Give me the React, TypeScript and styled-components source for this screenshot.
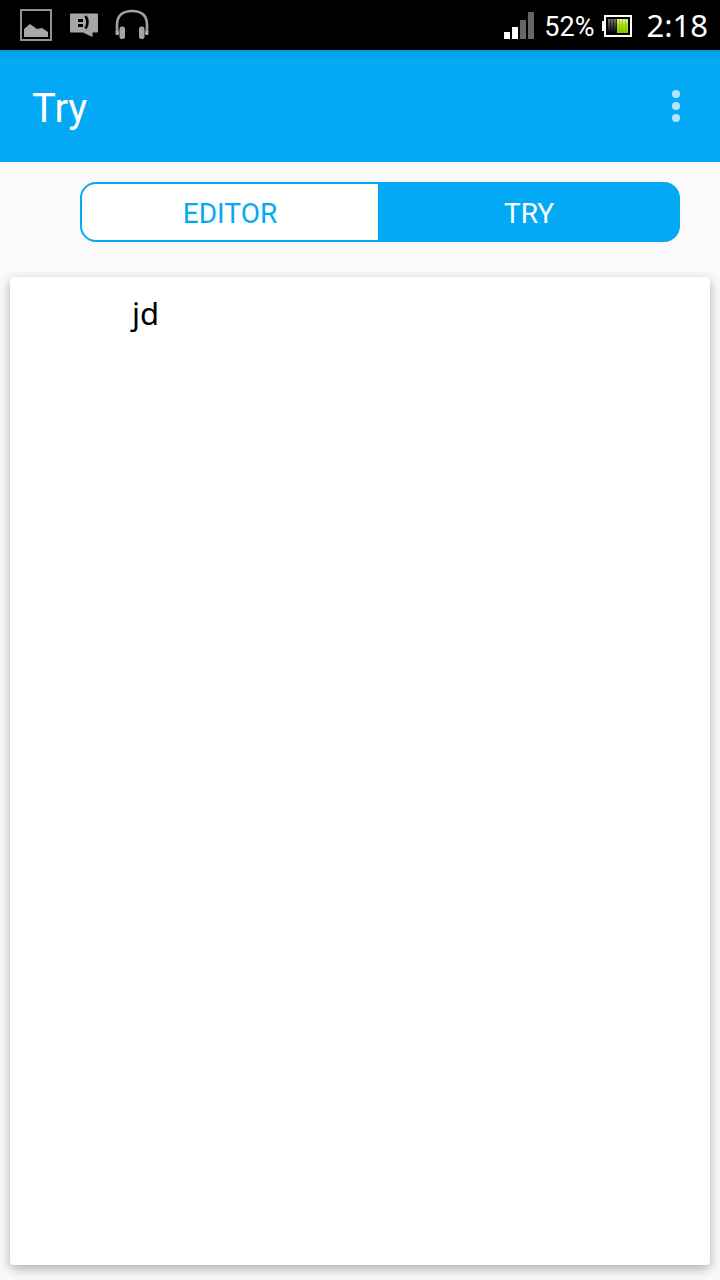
import React, { useState } from "react";
import styled, { createGlobalStyle } from "styled-components";

const BLUE = "#03a9f4";

const GlobalStyle = createGlobalStyle`
  * { box-sizing: border-box; }
  body { margin: 0; background: #fafafa; font-family: Roboto, sans-serif; }
`;

const Screen = styled.div`
  display: flex;
  flex-direction: column;
  min-height: 100vh;
`;

const StatusBar = styled.div`
  display: flex;
  align-items: center;
  justify-content: space-between;
  height: 50px;
  padding: 0 12px 0 18px;
  background: #000;
  color: #fff;
`;

const StatusGroup = styled.div<{ $gap: number }>`
  display: flex;
  align-items: center;
  gap: ${(p) => p.$gap}px;
  svg { display: block; }
`;

const BatteryLevel = styled.span`
  padding: 4px 0 0 2px;
  font: 400 27px/46px Roboto, sans-serif;
`;

const Clock = styled.time`
  padding-left: 6px;
  font: 400 31px/50px "Noto Sans", sans-serif;
`;

const AppBar = styled.header`
  display: flex;
  align-items: center;
  justify-content: space-between;
  height: 112px;
  padding: 0 24px 0 32px;
  background: linear-gradient(#0596d9, #049fe6 3px, ${BLUE} 10px);
`;

const Title = styled.h1`
  margin: 0;
  padding-top: 6px;
  color: #fff;
  font-size: 40px;
  font-weight: 400;
  line-height: 48px;
`;

const MenuButton = styled.button`
  width: 40px;
  height: 64px;
  padding: 0;
  border: 0;
  background: none;
  svg { display: block; }
`;

const Segments = styled.div`
  display: grid;
  grid-template-columns: 1fr 1fr;
  height: 60px;
  margin: 20px 40px 35px 80px;
  border: 2px solid ${BLUE};
  border-radius: 16px;
  background: ${BLUE};
  overflow: hidden;
`;

const Segment = styled.button<{ $active: boolean }>`
  padding: 4px 0 0;
  border: 0 solid ${BLUE};
  background: ${(p) => (p.$active ? BLUE : "#fff")};
  color: ${(p) => (p.$active ? "#fff" : BLUE)};
  font: 400 28px/32px Roboto, sans-serif;

  &:first-child { border-right-width: 2px; }
`;

const Card = styled.main`
  flex: 1;
  margin: 0 10px 15px;
  padding: 16px 122px;
  border-radius: 4px;
  background: #fff;
  box-shadow: 0 4px 12px rgba(0, 0, 0, 0.3);
`;

const Content = styled.p`
  margin: 0;
  color: #000;
  font-family: "Noto Sans", sans-serif;
  font-size: 31px;
  line-height: 40px;
`;

const PictureIcon = () => (
  <svg width="36" height="36" viewBox="0 0 36 36" aria-hidden="true">
    <rect x="3" y="3" width="30" height="30" fill="none" stroke="#929292" strokeWidth="2" />
    <path d="M6 30V22L12 17L19 22L24 21L30 25V30Z" fill="#a6a6a6" />
  </svg>
);

const ChatIcon = () => (
  <svg width="36" height="36" viewBox="0 0 36 36" aria-hidden="true">
    <path d="M5 6.500H31Q32 6.500 32 7.500V24.500Q32 25.500 31 25.500H26.500V30L17 25.500H5Q4 25.500 4 24.500V7.500Q4 6.500 5 6.500Z" fill="#a6a6a6" />
    <path d="M12 13.500H17M12 18.500H17" stroke="#000" strokeWidth="3" />
    <path d="M19.500 9Q23.500 15 19.500 21.500" fill="none" stroke="#000" strokeWidth="2.600" />
  </svg>
);

const HeadphonesIcon = () => (
  <svg width="36" height="36" viewBox="0 0 36 36" aria-hidden="true">
    <path d="M3 24V18C3 8 9 4 18 4S33 8 33 18V24" fill="none" stroke="#a0a0a0" strokeWidth="2.600" />
    <rect x="5.500" y="19.500" width="5.500" height="12.500" rx="2.500" fill="#a6a6a6" />
    <rect x="25" y="19.500" width="5.500" height="12.500" rx="2.500" fill="#a6a6a6" />
    <rect x="1.500" y="23.500" width="3.500" height="4.500" rx="1" fill="#a6a6a6" />
    <rect x="31" y="23.500" width="3.500" height="4.500" rx="1" fill="#a6a6a6" />
  </svg>
);

const SignalIcon = () => (
  <svg width="30" height="28" viewBox="0 0 30 28" aria-hidden="true">
    <path d="M0 21H6V28H0ZM8 16H14V28H8Z" fill="#fff" />
    <path d="M16 9H22V28H16ZM24 1H30V28H24Z" fill="#666" />
  </svg>
);

const BatteryIcon = () => (
  <svg width="30" height="24" viewBox="0 0 30 24" aria-hidden="true">
    <defs>
      <linearGradient id="empty" x2="0" y2="1">
        <stop stopColor="#777" />
        <stop offset="1" stopColor="#000" />
      </linearGradient>
      <linearGradient id="charge" x2="0" y2="1">
        <stop stopColor="#e4f79c" />
        <stop offset=".45" stopColor="#a5df16" />
        <stop offset="1" stopColor="#8fcb00" />
      </linearGradient>
    </defs>
    <rect x="3" y="3" width="26" height="20" fill="#000" stroke="#fff" strokeWidth="2" />
    <rect x="0" y="8" width="2" height="10" fill="#fff" />
    <rect x="6" y="6" width="9" height="14" fill="url(#empty)" />
    <rect x="15" y="6" width="11" height="14" fill="url(#charge)" />
    <path d="M8.500 6V20M11.500 6V20M14.500 6V20" stroke="#000" opacity=".5" />
    <path d="M17.500 6V20M20.500 6V20M23.500 6V20" stroke="#659c00" opacity=".35" />
  </svg>
);

export default function App() {
  const [tab, setTab] = useState("TRY");
  return (
    <Screen>
      <GlobalStyle />
      <StatusBar>
        <StatusGroup $gap={12}>
          <PictureIcon />
          <ChatIcon />
          <HeadphonesIcon />
        </StatusGroup>
        <StatusGroup $gap={8}>
          <SignalIcon />
          <BatteryLevel>52%</BatteryLevel>
          <BatteryIcon />
          <Clock>2:18</Clock>
        </StatusGroup>
      </StatusBar>
      <AppBar>
        <Title>Try</Title>
        <MenuButton type="button" aria-label="More options">
          <svg width="40" height="64" viewBox="0 0 40 64" fill="#b4e5fc" aria-hidden="true">
            <circle cx="20" cy="20" r="4" />
            <circle cx="20" cy="32" r="4" />
            <circle cx="20" cy="44" r="4" />
          </svg>
        </MenuButton>
      </AppBar>
      <Segments>
        {["EDITOR", "TRY"].map((name) => (
          <Segment
            key={name}
            type="button"
            $active={tab === name}
            aria-pressed={tab === name}
            onClick={() => setTab(name)}
          >
            {name}
          </Segment>
        ))}
      </Segments>
      <Card>
        <Content>jd</Content>
      </Card>
    </Screen>
  );
}
